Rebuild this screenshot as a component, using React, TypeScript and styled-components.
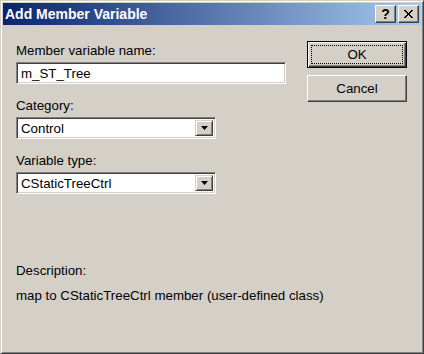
import React from "react";
import styled, { createGlobalStyle } from "styled-components";

const Global = createGlobalStyle`
  html, body { margin: 0; padding: 0; background: #d4d0c8; }
  * { box-sizing: border-box; }
`;

const FONT = `"Liberation Sans", Arial, sans-serif`;

const Frame = styled.div`
  width: 424px;
  height: 354px;
  background: #d4d0c8;
  border: 1px solid;
  border-color: #d4d0c8 #404040 #404040 #d4d0c8;
  box-shadow: inset 1px 1px #ffffff, inset -1px -1px #808080;
  padding: 2px;
  display: flex;
  flex-direction: column;
  font-family: ${FONT};
  font-size: 13.3px;
  color: #000;
`;

const TitleBar = styled.div`
  height: 22px;
  display: flex;
  align-items: center;
  padding: 0 2px 0 2px;
  background: linear-gradient(to right, #0a246a, #a6caf0);
  gap: 2px;
`;

const TitleText = styled.div`
  flex: 1;
  color: #fff;
  font-weight: bold;
  font-size: 14px;
  line-height: 22px;
  white-space: nowrap;
`;

const CaptionButton = styled.div`
  width: 21px;
  height: 18px;
  background: #d4d0c8;
  border: 1px solid;
  border-color: #ffffff #404040 #404040 #ffffff;
  box-shadow: inset -1px -1px #808080;
  display: flex;
  align-items: center;
  justify-content: center;
  font-weight: bold;
  font-size: 14px;
  line-height: 1;
  color: #000;
`;

const Body = styled.div`
  flex: 1;
  display: flex;
`;

const LeftColumn = styled.div`
  flex: 1;
  min-width: 0;
  padding: 18px 0 0 13px;
  display: flex;
  flex-direction: column;
`;

const Field = styled.div<{ $gapTop: number }>`
  display: flex;
  flex-direction: column;
  gap: 4px;
  margin-top: ${(p) => p.$gapTop}px;
`;

const Label = styled.div`
  line-height: 15px;
  height: 15px;
  white-space: nowrap;
`;

const Sunken = styled.div<{ $width: number }>`
  width: ${(p) => p.$width}px;
  height: 22px;
  background: #fff;
  border: 1px solid;
  border-color: #808080 #ffffff #ffffff #808080;
  box-shadow: inset 1px 1px #404040, inset -1px -1px #d4d0c8;
  padding: 2px;
  display: flex;
  align-items: stretch;
`;

const FieldText = styled.div`
  flex: 1;
  padding-left: 2px;
  line-height: 18px;
  white-space: nowrap;
`;

const DropButton = styled.div`
  width: 18px;
  background: #d4d0c8;
  border: 1px solid;
  border-color: #d4d0c8 #404040 #404040 #d4d0c8;
  box-shadow: inset 1px 1px #ffffff, inset -1px -1px #808080;
  display: flex;
  align-items: center;
  justify-content: center;
`;

const Description = styled.div`
  margin-top: 69px;
  display: flex;
  flex-direction: column;
  gap: 10px;
`;

const RightColumn = styled.div`
  flex-shrink: 0;
  width: 114px;
  padding: 16px 14px 0 0;
  display: flex;
  flex-direction: column;
  gap: 7px;
`;

const PushButton = styled.div<{ $default?: boolean }>`
  position: relative;
  width: 100px;
  height: 27px;
  background: #d4d0c8;
  border: 1px solid;
  border-color: ${(p) => (p.$default ? "#000 #000 #000 #000" : "#ffffff #404040 #404040 #ffffff")};
  box-shadow: ${(p) =>
    p.$default
      ? "inset 1px 1px #ffffff, inset -1px -1px #404040, inset -2px -2px #808080"
      : "inset -1px -1px #808080"};
  display: flex;
  align-items: center;
  justify-content: center;
  font-size: 13.3px;
  ${(p) =>
    p.$default
      ? `&::after {
    content: "";
    position: absolute;
    inset: 3px;
    border: 1px dotted #000;
  }`
      : ""}
`;

const Arrow = () => (
  <svg width="7" height="4" viewBox="0 0 7 4">
    <path d="M0 0H7L3.5 4Z" fill="#000" />
  </svg>
);

const CloseGlyph = () => (
  <svg width="9" height="8" viewBox="0 0 9 8" shapeRendering="crispEdges">
    <path
      d="M0 0h2v1h-2zM7 0h2v1h-2zM1 1h2v1h-2zM6 1h2v1h-2zM2 2h2v1h-2zM5 2h2v1h-2zM3 3h3v1h-3zM3 4h3v1h-3zM2 5h2v1h-2zM5 5h2v1h-2zM1 6h2v1h-2zM6 6h2v1h-2zM0 7h2v1h-2zM7 7h2v1h-2z"
      fill="#000"
    />
  </svg>
);

export default function App() {
  return (
    <>
      <Global />
      <Frame>
        <TitleBar>
          <TitleText>Add Member Variable</TitleText>
          <CaptionButton>?</CaptionButton>
          <CaptionButton>
            <CloseGlyph />
          </CaptionButton>
        </TitleBar>
        <Body>
          <LeftColumn>
            <Field $gapTop={0}>
              <Label>Member variable name:</Label>
              <Sunken $width={270}>
                <FieldText>m_ST_Tree</FieldText>
              </Sunken>
            </Field>
            <Field $gapTop={14}>
              <Label>Category:</Label>
              <Sunken $width={200}>
                <FieldText>Control</FieldText>
                <DropButton>
                  <Arrow />
                </DropButton>
              </Sunken>
            </Field>
            <Field $gapTop={14}>
              <Label>Variable type:</Label>
              <Sunken $width={200}>
                <FieldText>CStaticTreeCtrl</FieldText>
                <DropButton>
                  <Arrow />
                </DropButton>
              </Sunken>
            </Field>
            <Description>
              <Label>Description:</Label>
              <Label>map to CStaticTreeCtrl member (user-defined class)</Label>
            </Description>
          </LeftColumn>
          <RightColumn>
            <PushButton $default>OK</PushButton>
            <PushButton>Cancel</PushButton>
          </RightColumn>
        </Body>
      </Frame>
    </>
  );
}
